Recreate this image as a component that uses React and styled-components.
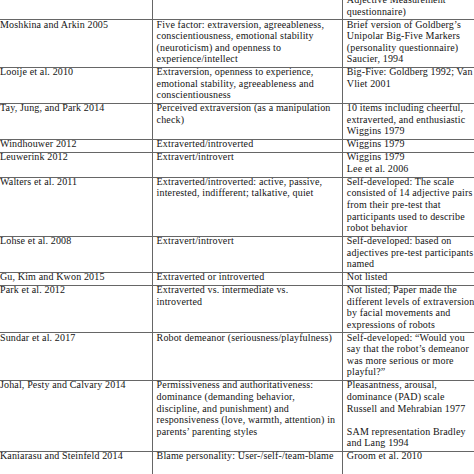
import React from "react";
import styled, { createGlobalStyle } from "styled-components";

const GlobalStyle = createGlobalStyle`
  html, body {
    margin: 0;
    padding: 0;
    background: #ffffff;
    overflow: hidden;
  }
`;

const Page = styled.div`
  width: 474px;
  height: 474px;
  overflow: hidden;
  background: #ffffff;
  font-family: "Liberation Serif", "Times New Roman", serif;
  font-size: 10px;
  letter-spacing: 0.15px;
  color: #141414;
`;

const Table = styled.div`
  width: 560px;
  margin-top: -4.4px;
  display: flex;
  flex-direction: column;
`;

const Row = styled.div`
  display: grid;
  grid-template-columns: 152px 190px 1fr;
  border-top: ${(p) => (p.$header ? "none" : "1px solid #666666")};
  min-height: ${(p) => (p.$last ? "60px" : "0")};
`;

const Cell = styled.div`
  border-left: ${(p) => (p.$first ? "none" : "1px solid #666666")};
  padding: 0 2px 2.1px ${(p) => (p.$first ? "0" : p.$col === 3 ? "3.8px" : "3.6px")};
`;

const Lines = styled.div`
  margin-top: -1.65px;
  line-height: 11.55px;
`;

const Line = styled.span`
  display: block;
  white-space: nowrap;
`;

const rows = [
  {
    a: ["Moshkina and Arkin 2005"],
    b: [
      "Five factor: extraversion, agreeableness,",
      "conscientiousness, emotional stability",
      "(neuroticism) and openness to",
      "experience/intellect",
    ],
    c: [
      "Brief version of Goldberg\u2019s",
      "Unipolar Big-Five Markers",
      "(personality questionnaire)",
      "Saucier, 1994",
    ],
  },
  {
    a: ["Looije et al. 2010"],
    b: [
      "Extraversion, openness to experience,",
      "emotional stability, agreeableness and",
      "conscientiousness",
    ],
    c: ["Big-Five: Goldberg 1992; Van", "Vliet 2001"],
  },
  {
    a: ["Tay, Jung, and Park 2014"],
    b: ["Perceived extraversion (as a manipulation", "check)"],
    c: ["10 items including cheerful,", "extraverted, and enthusiastic", "Wiggins 1979"],
  },
  {
    a: ["Windhouwer 2012"],
    b: ["Extraverted/introverted"],
    c: ["Wiggins 1979"],
  },
  {
    a: ["Leuwerink 2012"],
    b: ["Extravert/introvert"],
    c: ["Wiggins 1979", "Lee et al. 2006"],
  },
  {
    a: ["Walters et al. 2011"],
    b: [
      "Extraverted/introverted: active, passive,",
      "interested, indifferent; talkative, quiet",
    ],
    c: [
      "Self-developed: The scale",
      "consisted of 14 adjective pairs",
      "from their pre-test that",
      "participants used to describe",
      "robot behavior",
    ],
  },
  {
    a: ["Lohse et al. 2008"],
    b: ["Extravert/introvert"],
    c: ["Self-developed: based on", "adjectives pre-test participants", "named"],
  },
  {
    a: ["Gu, Kim and Kwon 2015"],
    b: ["Extraverted or introverted"],
    c: ["Not listed"],
  },
  {
    a: ["Park et al. 2012"],
    b: ["Extraverted vs. intermediate vs.", "introverted"],
    c: [
      "Not listed; Paper made the",
      "different levels of extraversion",
      "by facial movements and",
      "expressions of robots",
    ],
  },
  {
    a: ["Sundar et al. 2017"],
    b: ["Robot demeanor (seriousness/playfulness)"],
    c: [
      "Self-developed: \u201cWould you",
      "say that the robot\u2019s demeanor",
      "was more serious or more",
      "playful?\u201d",
    ],
  },
  {
    a: ["Johal, Pesty and Calvary 2014"],
    b: [
      "Permissiveness and authoritativeness:",
      "dominance (demanding behavior,",
      "discipline, and punishment) and",
      "responsiveness (love, warmth, attention) in",
      "parents\u2019 parenting styles",
    ],
    c: [
      "Pleasantness, arousal,",
      "dominance (PAD) scale",
      "Russell and Mehrabian 1977",
      "\u00a0",
      "SAM representation Bradley",
      "and Lang 1994",
    ],
  },
  {
    a: ["Kaniarasu and Steinfeld 2014"],
    b: ["Blame personality: User-/self-/team-blame"],
    c: ["Groom et al. 2010"],
  },
];

function CellLines({ lines }) {
  return (
    <Lines>
      {lines.map((t, i) => (
        <Line key={i}>{t}</Line>
      ))}
    </Lines>
  );
}

export default function App() {
  return (
    <>
      <GlobalStyle />
      <Page>
        <Table>
          <Row $header>
            <Cell $first>
              <CellLines lines={["\u00a0", "\u00a0"]} />
            </Cell>
            <Cell $col={2}>
              <CellLines lines={["\u00a0", "\u00a0"]} />
            </Cell>
            <Cell $col={3}>
              <CellLines lines={["Adjective Measurement", "questionnaire)"]} />
            </Cell>
          </Row>
          {rows.map((r, i) => (
            <Row key={i} $last={i === rows.length - 1}>
              <Cell $first>
                <CellLines lines={r.a} />
              </Cell>
              <Cell $col={2}>
                <CellLines lines={r.b} />
              </Cell>
              <Cell $col={3}>
                <CellLines lines={r.c} />
              </Cell>
            </Row>
          ))}
        </Table>
      </Page>
    </>
  );
}
